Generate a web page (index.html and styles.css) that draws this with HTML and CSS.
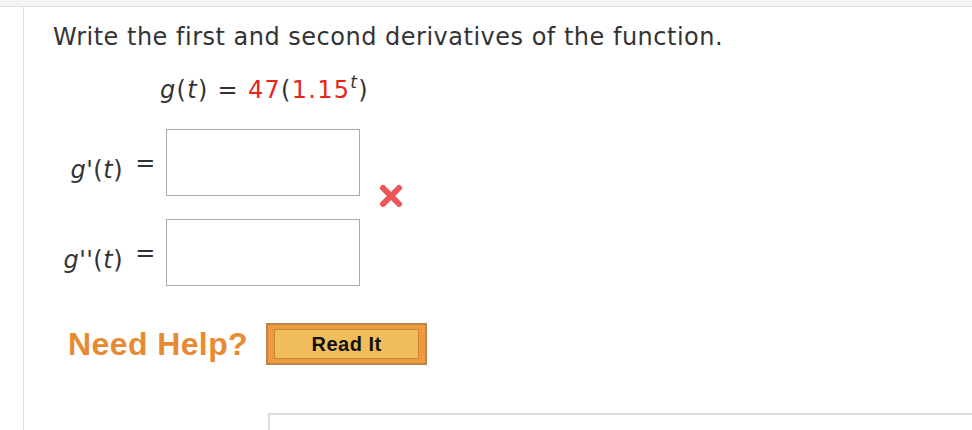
FILE: index.html
```html
<!DOCTYPE html>
<html>
<head>
<meta charset="utf-8">
<link rel="stylesheet" href="styles.css">
</head>
<body>
<div class="topband"></div>
<div class="frame">
  <div class="question">
    <p class="prompt">Write the first and second derivatives of the function.</p>
    <div class="equation"><span class="var">g</span>(<span class="var">t</span>) = <span class="red">47</span>(<span class="red">1.15</span><sup class="var">t</sup>)</div>
    <div class="answers">
      <div class="row">
        <span class="label"><span class="var">g'</span>(<span class="var">t</span>)</span>
        <span class="eq">=</span>
        <span class="box"></span>
        <span class="mark">
          <svg width="26" height="26" viewBox="0 0 26 26"><path d="M5 5 L21 21 M21 5 L5 21" stroke="#e84545" stroke-width="6" stroke-linecap="round" opacity="0.9"/></svg>
        </span>
      </div>
      <div class="row">
        <span class="label"><span class="var">g''</span>(<span class="var">t</span>)</span>
        <span class="eq">=</span>
        <span class="box"></span>
        <span class="mark"></span>
      </div>
    </div>
    <div class="help">
      <span class="need">Need Help?</span>
      <span class="btn"><span class="btn-inner">Read It</span></span>
    </div>
  </div>
  <div class="nextbox"></div>
</div>
</body>
</html>
```
FILE: styles.css
```css
html, body {
  margin: 0;
  padding: 0;
  background: #fff;
}
body {
  font-family: "DejaVu Sans", Verdana, sans-serif;
  color: #333;
  width: 972px;
  height: 430px;
  overflow: hidden;
}
.topband {
  height: 6px;
  background: #f5f5f5;
  border-bottom: 1px solid #dedede;
}
.frame {
  margin-left: 23px;
  border-left: 1px solid #dedede;
  height: 423px;
  padding-left: 29px;
  display: flex;
  flex-direction: column;
}
.prompt {
  margin: 0;
  padding-top: 15px;
  font-size: 24px;
  letter-spacing: 0.5px;
  line-height: 30px;
}
.equation {
  margin-top: 23px;
  padding-left: 107px;
  font-size: 24px;
  letter-spacing: 1.3px;
  line-height: 30px;
}
.var {
  font-style: italic;
}
.red {
  color: #e8251c;
}
sup {
  font-size: 17px;
  line-height: 0;
  vertical-align: 10px;
}
.answers {
  margin-top: 24px;
  display: flex;
  flex-direction: column;
  gap: 23px;
}
.row {
  display: grid;
  grid-template-columns: 70px 43px 194px 60px;
  align-items: center;
  font-size: 24px;
  letter-spacing: 0.5px;
}
.label {
  text-align: right;
  margin-top: 14px;
}
.eq {
  text-align: center;
  padding-left: 2px;
}
.box {
  height: 67px;
  box-sizing: border-box;
  border: 1.5px solid #aaa;
  background: #fff;
  display: block;
}
.mark {
  display: flex;
  justify-content: flex-start;
  padding-left: 18px;
  align-self: end;
  margin-bottom: -13px;
}
.help {
  margin-top: 37px;
  display: flex;
  align-items: center;
  gap: 18px;
  padding-left: 15px;
}
.need {
  font-family: "Liberation Sans", Arial, sans-serif;
  font-weight: bold;
  font-size: 32px;
  letter-spacing: 0.4px;
  color: #e88a34;
}
.btn {
  display: block;
  border: 2px solid #c0854a;
  background: #ee9a3c;
  padding: 4px 6px;
  box-sizing: border-box;
  width: 161px;
  height: 42px;
}
.btn-inner {
  display: flex;
  align-items: center;
  justify-content: center;
  height: 100%;
  border: 1px solid #c9873d;
  background: #f2bd5c;
  box-sizing: border-box;
  font-family: "Liberation Sans", Arial, sans-serif;
  font-weight: bold;
  font-size: 20px;
  letter-spacing: 0.5px;
  color: #111;
}
.nextbox {
  margin-top: 48px;
  margin-left: 215px;
  flex: 1;
  border-top: 2px solid #dcdcdc;
  border-left: 2px solid #dcdcdc;
}
```
